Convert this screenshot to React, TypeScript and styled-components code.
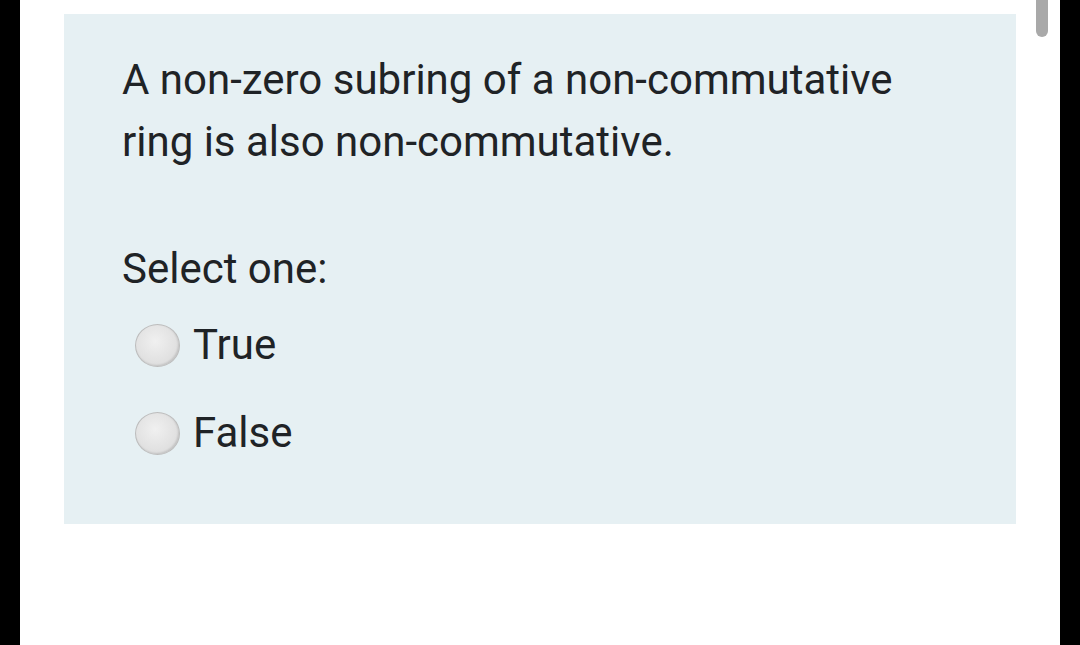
import React from 'react';
import styled, { createGlobalStyle } from 'styled-components';

const GlobalStyle = createGlobalStyle`
  html, body {
    margin: 0;
    padding: 0;
    background: #000;
    height: 100%;
  }
  #root {
    height: 100%;
  }
`;

const App: React.FC = () => {
  return (
    <>
      <GlobalStyle />
      <Screen>
        <Page>
          <QuestionCard>
            <QuestionText>
              A non-zero subring of a non-commutative ring is also non-commutative.
            </QuestionText>
            <Prompt>Select one:</Prompt>
            <Options>
              <Option>
                <Radio type="radio" name="answer" />
                <span>True</span>
              </Option>
              <Option>
                <Radio type="radio" name="answer" />
                <span>False</span>
              </Option>
            </Options>
          </QuestionCard>
        </Page>
        <ScrollThumb />
      </Screen>
    </>
  );
};

export default App;

// 전체 화면
const Screen = styled.div`
  position: relative;
  width: 1080px;
  height: 645px;
  background: #000;
  display: flex;
  padding: 0 20px;
  box-sizing: border-box;
  overflow: hidden;
`;

// 흰 페이지
const Page = styled.div`
  flex: 1;
  background: #fff;
  padding: 14px 44px 0 44px;
  font-family: Roboto, 'Liberation Sans', sans-serif;
  color: #1f2326;
`;

// 문제 카드
const QuestionCard = styled.div`
  width: 952px;
  height: 510px;
  background: #e6f0f3;
  box-sizing: border-box;
  padding: 35px 58px 0 58px;
`;

const QuestionText = styled.p`
  margin: 0;
  font-size: 42px;
  line-height: 62px;
  width: 800px;
`;

const Prompt = styled.div`
  margin-top: 71px;
  font-size: 42px;
  line-height: 50px;
`;

const Options = styled.div`
  margin-top: 29px;
  display: flex;
  flex-direction: column;
  gap: 44px;
  padding-left: 13px;
`;

const Option = styled.label`
  display: flex;
  align-items: center;
  gap: 13px;
  font-size: 42px;
  line-height: 44px;
`;

const Radio = styled.input`
  appearance: none;
  margin: 0;
  width: 45px;
  height: 43px;
  border-radius: 50%;
  background: radial-gradient(circle at 45% 40%, #f0f0f0 0%, #e0e0e0 65%, #d2d2d2 100%);
  border: 1.5px solid #bdbdbd;
  box-shadow: inset -1px -1px 2px rgba(0, 0, 0, 0.12);
  box-sizing: border-box;
`;

// 스크롤바
const ScrollThumb = styled.div`
  position: absolute;
  top: -10px;
  left: 1036px;
  width: 12px;
  height: 47px;
  border-radius: 6px;
  background: #a9a9a9;
`;
